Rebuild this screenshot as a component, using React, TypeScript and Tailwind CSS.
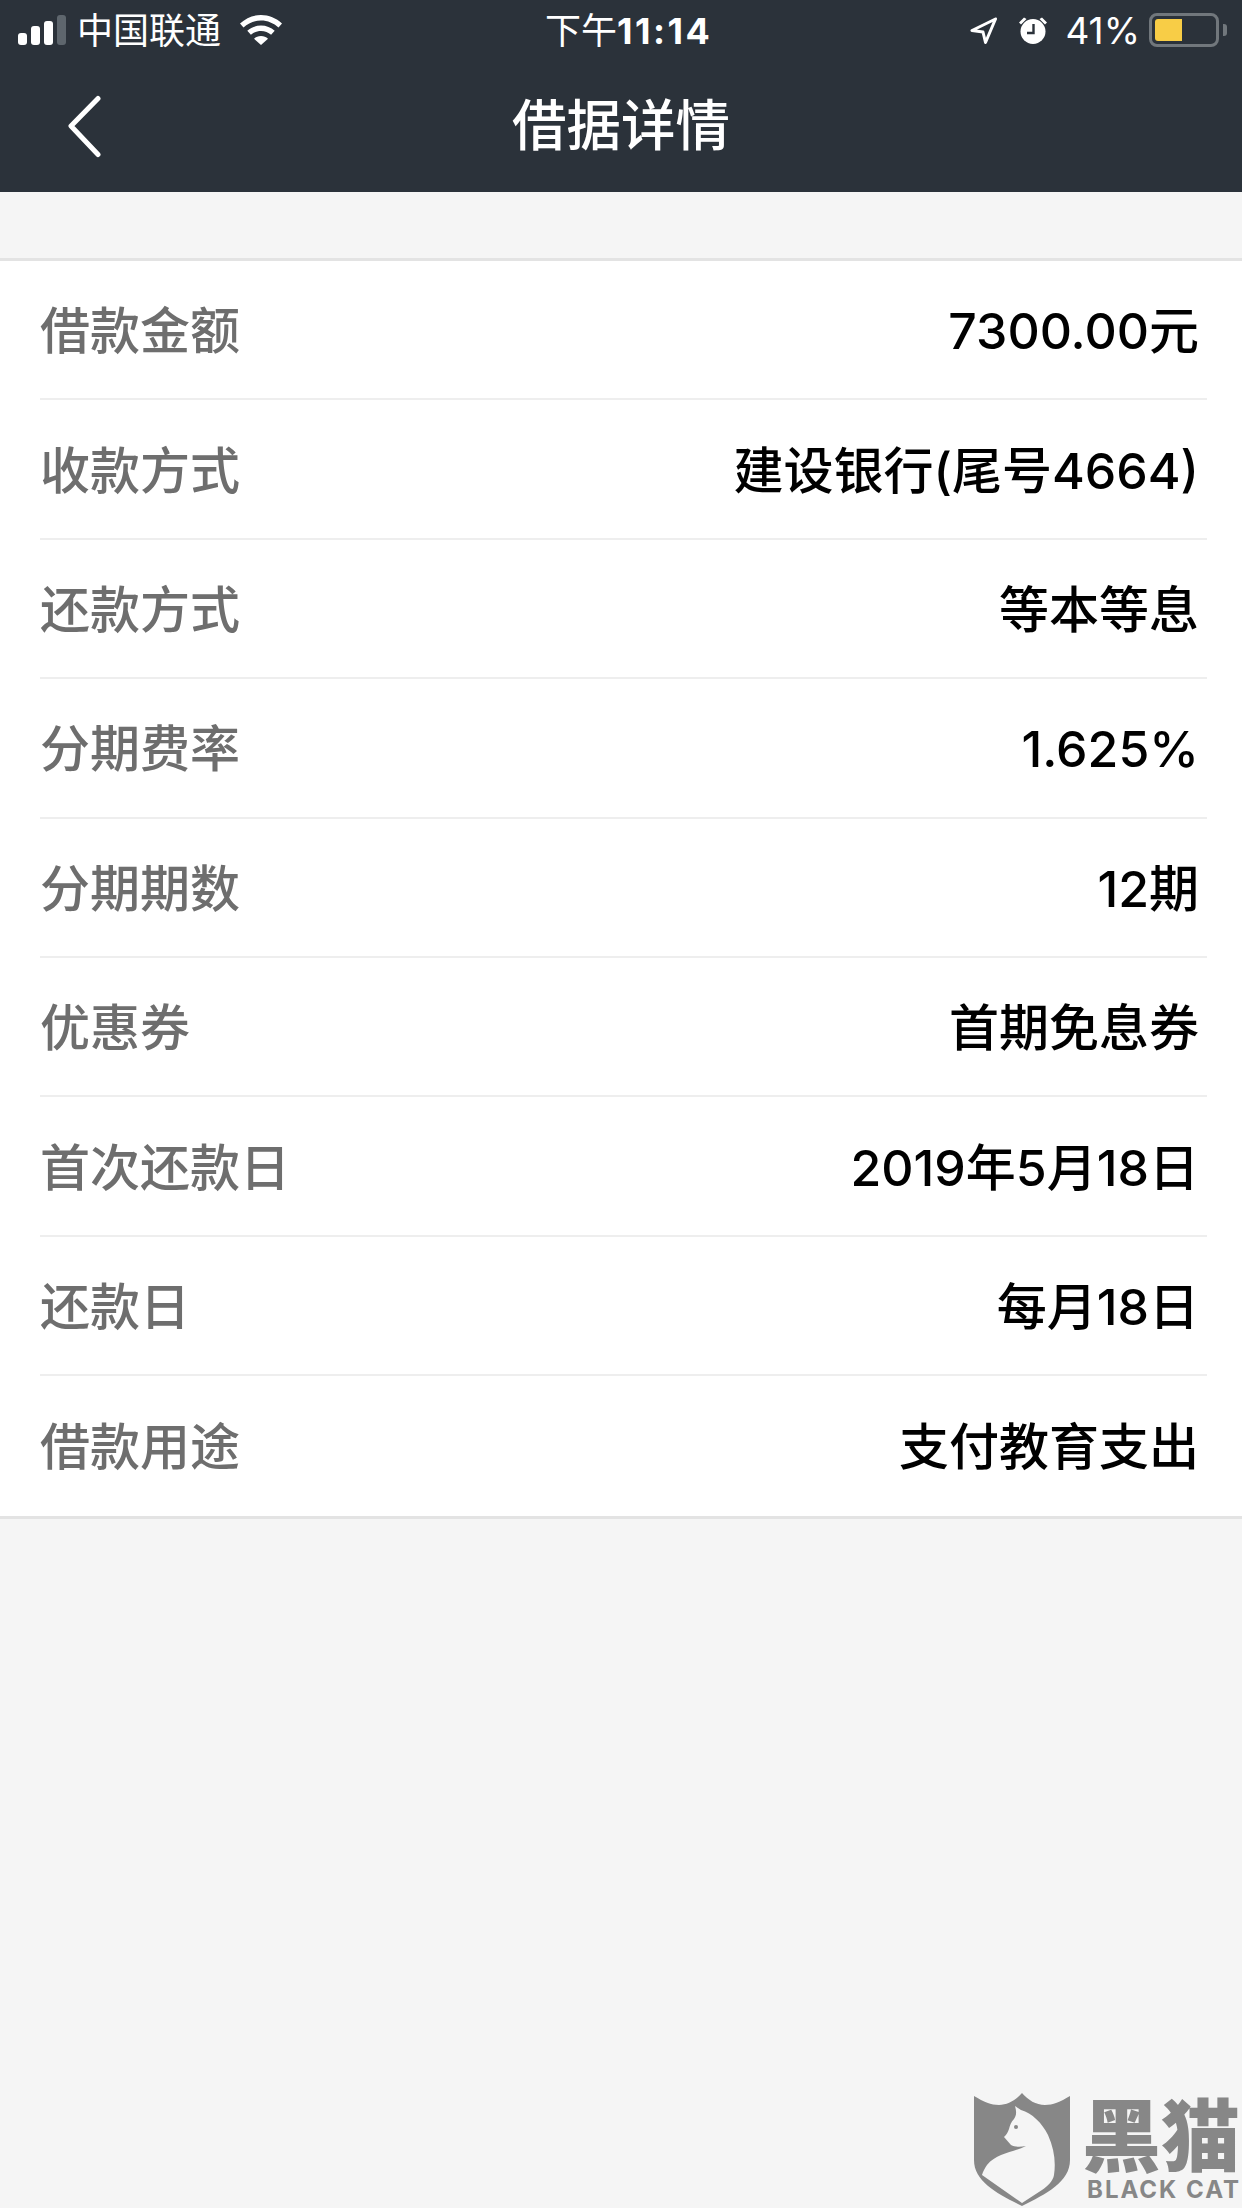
const FONT = "[font-family:Inter,'Noto_Sans_CJK_SC',sans-serif]";

const ROWS = [
  { label: "借款金额", value: "7300.00元" },
  { label: "收款方式", value: "建设银行(尾号4664)" },
  { label: "还款方式", value: "等本等息" },
  { label: "分期费率", value: "1.625%" },
  { label: "分期期数", value: "12期" },
  { label: "优惠券", value: "首期免息券" },
  { label: "首次还款日", value: "2019年5月18日" },
  { label: "还款日", value: "每月18日" },
  { label: "借款用途", value: "支付教育支出" },
];

function SignalBars() {
  return (
    <div className="flex items-end gap-[4px] h-[30px]">
      <div className="w-[9px] h-[12px] rounded-[3px] bg-white" />
      <div className="w-[9px] h-[19px] rounded-[3px] bg-white" />
      <div className="w-[9px] h-[24px] rounded-[3px] bg-white" />
      <div className="w-[9px] h-[30px] rounded-[3px] bg-[#5e666d]" />
    </div>
  );
}

function Wifi() {
  return (
    <svg width="42" height="30" viewBox="0 0 42 30" fill="white">
      <path d="M21 0C13 0 6 3 0 8.500l3.500 4C8.200 8.200 14.300 5.500 21 5.500s12.800 2.700 17.500 7l3.500-4C36 3 29 0 21 0z" />
      <path d="M21 10.500c-5.200 0-10 2-13.700 5.300l3.600 4c2.700-2.400 6.200-3.900 10.100-3.900s7.400 1.500 10.100 3.900l3.600-4C31 12.500 26.200 10.500 21 10.500z" />
      <path d="M21 21c-2.700 0-5.200 1-7 2.700L21 30l7-6.300C26.200 22 23.700 21 21 21z" />
    </svg>
  );
}

function LocationArrow() {
  return (
    <svg width="27" height="27" viewBox="0 0 27 27" fill="none" stroke="white" strokeWidth="3" strokeLinejoin="round">
      <path d="M25.500 2 2 13.500l11 1.500 2.500 10.500z" />
    </svg>
  );
}

function Alarm() {
  return (
    <svg width="28" height="27" viewBox="0 0 28 27">
      <circle cx="14" cy="14.500" r="12.500" fill="white" />
      <path d="M0 5.500 5 .500 7.500 2 2 7.500zM28 5.500 23 .500 20.500 2 26 7.500z" fill="white" />
      <path d="M14.500 7v9H8" fill="none" stroke="#2b323a" strokeWidth="2.400" />
    </svg>
  );
}

function Battery() {
  return (
    <div className="flex items-center gap-[4px]">
      <div className="w-[70px] h-[34px] rounded-[8px] border-[3px] border-[#71777c] p-[3px]">
        <div className="w-[27px] h-full rounded-l-[3px] bg-[#f8cd46]" />
      </div>
      <div className="w-[4px] h-[12px] rounded-r-[3px] bg-[#71777c]" />
    </div>
  );
}

function StatusBar() {
  return (
    <div className="relative h-[60px] flex items-center justify-between pl-[18px] pr-[15px] text-white">
      <div className="flex items-center">
        <SignalBars />
        <span className="ml-[11px] text-[36px] leading-[42px] mt-[2px]">中国联通</span>
        <div className="ml-[19px]">
          <Wifi />
        </div>
      </div>
      <div className="absolute left-[545px] top-[10px] text-[36px] leading-[42px]">
        下午<span className="font-bold tracking-[2.500px]">11:14</span>
      </div>
      <div className="flex items-center">
        <LocationArrow />
        <div className="ml-[22px]">
          <Alarm />
        </div>
        <span className="ml-[18px] text-[37px] leading-[42px] mt-[2px]">41%</span>
        <div className="ml-[9px]">
          <Battery />
        </div>
      </div>
    </div>
  );
}

function NavBar() {
  return (
    <div className="relative h-[132px] flex items-center justify-center pb-[3px]">
      <svg className="absolute left-[66px] top-[35px]" width="36" height="63" viewBox="0 0 36 63" fill="none" stroke="white" strokeWidth="5" strokeLinecap="round" strokeLinejoin="round">
        <path d="M32 3.500 5 31l27 28.500" />
      </svg>
      <h1 className="text-[54.500px] leading-[64px] font-medium text-white">借据详情</h1>
    </div>
  );
}

function Watermark() {
  return (
    <div className="absolute right-0 bottom-0 w-[268px] h-[115px] flex text-[#878787]">
      <svg width="96" height="113" viewBox="0 0 96 113">
        <path d="M0 3c10 6 17 9 25 9 9 0 17-5 23-12 6 7 14 12 23 12 8 0 15-3 25-9v64c0 22-24 34-48 46C24 101 0 89 0 67z" fill="#878787" />
        <path d="M41 13l6 4c11 3 21 13 27 25 6 13 8 27 6 40-1 6-6 11-12 15l-20 13L8 82c1-4 3-7 5-10 4-5 9-8 14-10 8-3 17-5 25-9-6 1-11 1-15-1l-7-8c3-3 4-5 5-8 1-4 2-7 5-10 2-3 3-6 1-13z" fill="#f5f5f5" />
        <circle cx="42" cy="34" r="2" fill="#878787" />
      </svg>
      <div className="ml-[12px] flex flex-col">
        <div className="mt-[6px] h-[76px] text-[79px] leading-[76px] font-black whitespace-nowrap">黑猫</div>
        <div className="ml-[5px] mt-[3px] text-[24px] leading-[24px] font-bold tracking-[2px] whitespace-nowrap">BLACK CAT</div>
      </div>
    </div>
  );
}

export default function App() {
  return (
    <div className={`relative w-[1242px] h-[2208px] overflow-hidden bg-[#f5f5f5] ${FONT}`}>
      <div className="bg-[#2b323a]">
        <StatusBar />
        <NavBar />
      </div>

      <div className="mt-[66px] bg-white border-y-[3px] border-[#e3e3e3]">
        {ROWS.map((row, i) => (
          <div key={row.label} className="ml-[40px] mr-[35px]">
            <div className={`h-[139.400px] pt-[3px] pr-[8px] flex items-center justify-between ${i < ROWS.length - 1 ? "border-b-2 border-[#eeeeee]" : ""}`}>
              <span className="text-[50px] leading-[60px] font-medium text-[#6e6e6e]">{row.label}</span>
              <span className="text-[50px] leading-[60px] font-medium text-black">{row.value}</span>
            </div>
          </div>
        ))}
      </div>

      <Watermark />
    </div>
  );
}
